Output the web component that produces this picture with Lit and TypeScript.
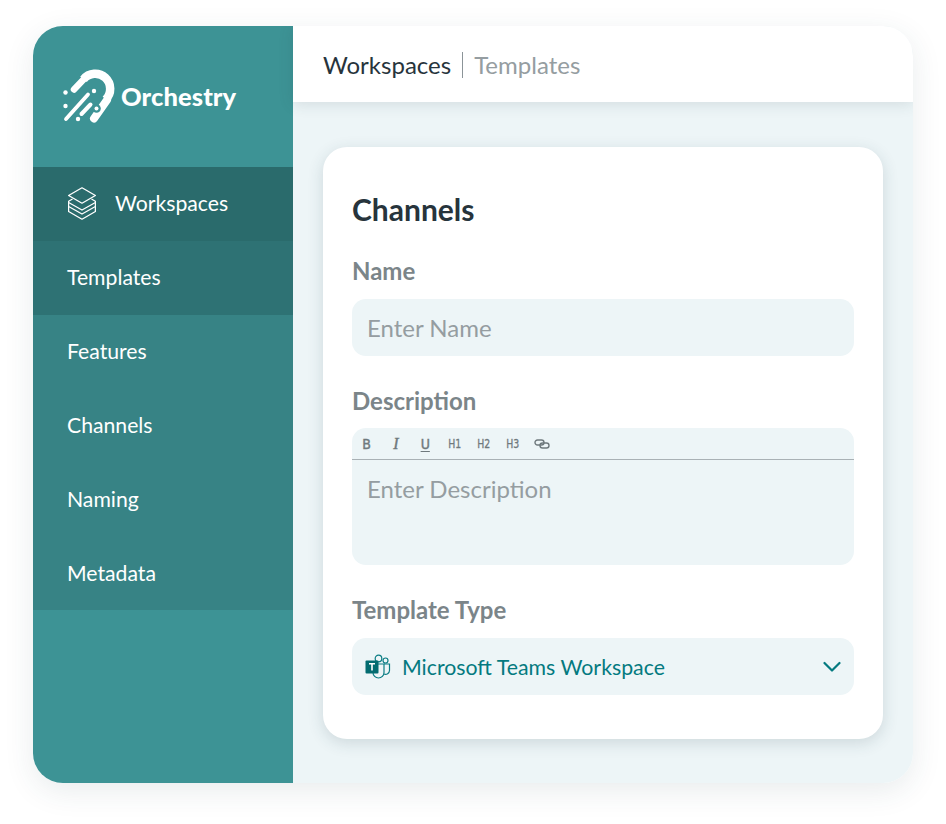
import { LitElement, html, css, svg } from "lit";
import { customElement } from "lit/decorators.js";

const NAV = ["Workspaces", "Templates", "Features", "Channels", "Naming", "Metadata"];

const logo = svg`<svg class="logo" viewBox="0 0 56 56" width="56" height="56" fill="none" stroke="#fff" stroke-linecap="round">
  <path d="M23.5 11.4 A15 15 0 1 1 45.6 31.6" stroke-width="8.5" stroke-linecap="butt"/>
  <path d="M24 11 L14 21.5" stroke-width="6.5"/>
  <path d="M47 32 L34 50.5" stroke-width="8"/>
  <path d="M6 51 L28 26.5" stroke-width="3.8"/>
  <path d="M21.5 46 L30.5 36.5" stroke-width="4"/>
  <circle cx="34" cy="23" r="2.2" fill="#fff" stroke="none"/>
  <circle cx="5.5" cy="24.5" r="2.2" fill="#fff" stroke="none"/>
  <circle cx="5.5" cy="38" r="2.2" fill="#fff" stroke="none"/>
  <circle cx="18" cy="51" r="2.2" fill="#fff" stroke="none"/>
  <circle cx="36.5" cy="40.5" r="4.3" fill="#3d9395" stroke="none"/>
  <circle cx="36.5" cy="40.5" r="2" fill="#fff" stroke="none"/>
</svg>`;

const layers = svg`<svg class="layers" viewBox="0 0 28 33" width="28" height="33" fill="none" stroke="#fff" stroke-width="1.3" stroke-linejoin="round">
  <path d="M14 0.8 L27.4 8.5 L14 16.2 L0.6 8.5 Z"/>
  <path d="M4.5 12 L0.6 14.2 V15.5 L14 23 L27.4 15.5 V14.2 L23.5 12"/>
  <path d="M0.6 15.5 V19.5 L14 27 L27.4 19.5 V15.5"/>
  <path d="M0.6 19.5 V24.5 L14 32.2 L27.4 24.5 V19.5"/>
</svg>`;

const teams = svg`<svg viewBox="0 0 26 26" width="26" height="26" fill="none">
  <circle cx="13.5" cy="4.5" r="3.3" stroke="#0b7d84" stroke-width="1.2"/>
  <circle cx="20.5" cy="6.5" r="2.5" stroke="#0b7d84" stroke-width="1.2"/>
  <path d="M9 10 H19 V18.5 A5.5 5.5 0 0 1 8 18.5 V14" stroke="#0b7d84" stroke-width="1.2"/>
  <path d="M19 10 H24.5 V16.5 A4 4 0 0 1 19 20" stroke="#0b7d84" stroke-width="1.2"/>
  <rect x="0.5" y="6.5" width="13" height="13" rx="1" fill="#036c70"/>
  <path d="M4 9.8 H10 M7 9.8 V16.5" stroke="#fff" stroke-width="1.6"/>
</svg>`;

const chevron = svg`<svg viewBox="0 0 18 12" width="18" height="12" fill="none" stroke="#047a80" stroke-width="2.2" stroke-linecap="round" stroke-linejoin="round">
  <path d="M1.5 2 L9 9.5 L16.5 2"/>
</svg>`;

const link = svg`<svg viewBox="0 0 16 10" width="16" height="10" fill="none" stroke="#6f797d" stroke-width="1.4">
  <rect x="1" y="1" width="9" height="5" rx="2.5"/>
  <rect x="6" y="4" width="9" height="5" rx="2.5"/>
</svg>`;

@customElement("app-root")
export class AppRoot extends LitElement {
  static styles = css`
    :host {
      display: block;
      width: 946px;
      height: 824px;
      box-sizing: border-box;
      padding: 26px 33px 41px;
      background: #fff;
      font-family: Lato, "Open Sans", sans-serif;
    }
    .frame {
      display: flex;
      width: 880px;
      height: 757px;
      border-radius: 30px;
      overflow: hidden;
      box-shadow: 0 8px 30px rgba(40, 70, 80, 0.1);
    }
    .side {
      width: 260px;
      flex: none;
      background: #3d9395;
      display: flex;
      flex-direction: column;
    }
    .brand {
      height: 141px;
      box-sizing: border-box;
      padding: 42px 0 0 27px;
      display: flex;
      align-items: flex-start;
      gap: 5px;
      color: #fff;
      font-weight: 900;
      font-size: 25.5px;
      line-height: 57px;
      letter-spacing: 0.1px;
    }
    .logo { flex: none; }
    .layers { margin-left: 1px; }
    .item {
      height: 73.83px;
      display: flex;
      align-items: center;
      padding-left: 34px;
      gap: 19px;
      color: #fff;
      font-size: 21.2px;
      background: #378385;
    }
    .item span { position: relative; top: -0.5px; }
    .item.current { background: #2a6b6c; }
    .item.sel { background: #2e7274; }
    .main {
      flex: 1;
      min-width: 0;
      background: #edf5f7;
      display: flex;
      flex-direction: column;
    }
    .top {
      height: 76px;
      flex: none;
      background: #fff;
      box-shadow: 0 2px 14px rgba(40, 70, 80, 0.14);
      display: flex;
      align-items: center;
      padding: 1px 0 0 30px;
      box-sizing: border-box;
      font-size: 24px;
      color: #27343c;
      position: relative;
    }
    .crumb2 {
      color: #959da1;
      border-left: 1.5px solid #8b9498;
      margin-left: 11px;
      padding-left: 11px;
      line-height: 26px;
    }
    .body { padding: 45px 30px 0; }
    .card {
      background: #fff;
      border-radius: 24px;
      padding: 44px 29px 44px;
      box-shadow: 0 4px 16px rgba(40, 70, 80, 0.16);
    }
    h1 {
      margin: 0;
      font-size: 30px;
      line-height: 36px;
      font-weight: 700;
      color: #27343c;
    }
    .label {
      font-size: 24px;
      line-height: 28px;
      font-weight: 700;
      color: #7b8589;
      margin: 31px 0 13px;
    }
    .label.first { margin: 30px 0 14px; }
    .label.third { margin: 31px 0 14px; }
    .field {
      height: 57px;
      box-sizing: border-box;
      background: #edf5f7;
      border-radius: 14px;
      display: flex;
      align-items: center;
      padding-left: 15px;
      font-size: 24px;
      color: #959da1;
    }
    .editor {
      height: 137px;
      background: #edf5f7;
      border-radius: 14px;
      overflow: hidden;
    }
    .tools {
      height: 32px;
      box-sizing: border-box;
      border-bottom: 1.5px solid #a9b1b5;
      display: flex;
      align-items: center;
    }
    .tool {
      width: 29.3px;
      display: flex;
      justify-content: center;
      align-items: center;
      font-family: "DejaVu Sans Condensed", "Liberation Sans", sans-serif;
      font-size: 14px;
      font-weight: 400;
      -webkit-text-stroke: 0.4px #6f797d;
      color: #6f797d;
      line-height: 14px;
    }
    .tool.i { font-style: italic; font-family: "Liberation Serif", serif; font-size: 16px; }
    .tool.u { text-decoration: underline; text-underline-offset: 2px; }
    .tool.h { font-size: 13px; transform: scaleX(0.8); -webkit-text-stroke: 0.3px #6f797d; }
    .placeholder {
      padding: 14px 15px 0;
      font-size: 24px;
      line-height: 30px;
      color: #959da1;
    }
    .select {
      color: #047a80;
      font-size: 21.3px;
      padding: 0 13px 0 13px;
      gap: 11px;
    }
    .select .grow { flex: 1; }
  `;

  render() {
    return html`
      <div class="frame">
        <aside class="side">
          <div class="brand">${logo}<span>Orchestry</span></div>
          <nav>
            ${NAV.map(
              (n, i) => html`<div class="item ${i === 0 ? "current" : i === 1 ? "sel" : ""}">
                ${i === 0 ? layers : ""}<span>${n}</span>
              </div>`
            )}
          </nav>
        </aside>
        <section class="main">
          <header class="top"><span>Workspaces</span><span class="crumb2">Templates</span></header>
          <div class="body">
            <div class="card">
              <h1>Channels</h1>
              <div class="label first">Name</div>
              <div class="field">Enter Name</div>
              <div class="label">Description</div>
              <div class="editor">
                <div class="tools">
                  <span class="tool">B</span>
                  <span class="tool i">I</span>
                  <span class="tool u">U</span>
                  <span class="tool h">H1</span>
                  <span class="tool h">H2</span>
                  <span class="tool h">H3</span>
                  <span class="tool">${link}</span>
                </div>
                <div class="placeholder">Enter Description</div>
              </div>
              <div class="label third">Template Type</div>
              <div class="field select">
                ${teams}<span class="grow">Microsoft Teams Workspace</span>${chevron}
              </div>
            </div>
          </div>
        </section>
      </div>
    `;
  }
}
